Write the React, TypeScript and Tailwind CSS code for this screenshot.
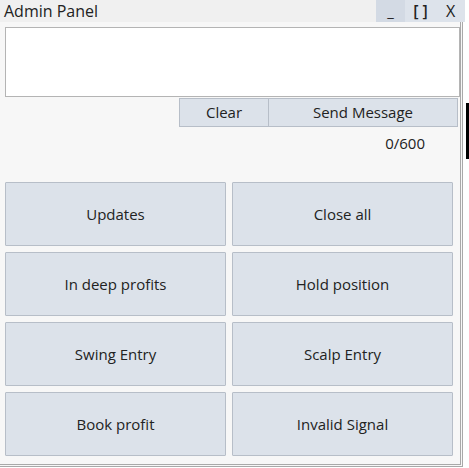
import React from "react";

const actions = [
  "Updates",
  "Close all",
  "In deep profits",
  "Hold position",
  "Swing Entry",
  "Scalp Entry",
  "Book profit",
  "Invalid Signal",
];

export default function App() {
  return (
    <div
      className="relative w-[469px] h-[468px] bg-white overflow-hidden text-[#222]"
      style={{ fontFamily: '"Open Sans", "DejaVu Sans", sans-serif' }}
    >
      {/* title bar */}
      <div className="flex h-[22px] w-[465px] items-center bg-[#f0f0f0]">
        <div className="flex-1 pl-[4px] text-[16px] leading-none">Admin Panel</div>
        <div className="flex h-full bg-[#dde3eb]">
          <div className="flex w-[29px] items-end justify-center pb-[3px] text-[15px] leading-none bg-[#d3dae4]">_</div>
          <div className="flex w-[31px] items-center justify-center text-[16px] leading-none font-semibold">[ ]</div>
          <div className="flex w-[29px] items-center justify-center text-[16px] leading-none">X</div>
        </div>
      </div>

      {/* window body */}
      <div className="w-[463px] h-[445px] bg-[#f7f7f7] border-r-[3px] border-b-[3px] border-double border-[#a9a9a9] border-t-0 border-l-0">
        <div className="pl-[5px] pt-[5px] pr-[1px]">
          <div className="h-[70px] w-[455px] bg-white border border-[#b4b4b4]" />
          <div className="flex justify-end pt-[1px] pr-[1px]">
            <button className="h-[29px] w-[90px] bg-[#dce2ea] border border-[#b7bec8] text-[15px]">Clear</button>
            <button className="h-[29px] w-[189px] bg-[#dce2ea] border border-l-0 border-[#b7bec8] text-[15px]">
              Send Message
            </button>
          </div>
          <div className="flex justify-end pr-[34px] pt-[6px] text-[15px] leading-[20px]">0/600</div>
        </div>

        <div className="grid grid-cols-2 gap-[6px] pl-[5px] pr-[7px] pt-[29px]">
          {actions.map((a) => (
            <button
              key={a}
              className="h-[64px] bg-[#dce2ea] border border-[#b7bec8] rounded-[1px] text-[15px]"
            >
              {a}
            </button>
          ))}
        </div>
      </div>

      <div className="absolute left-[466px] top-[103px] h-[56px] w-[3px] bg-black" />
    </div>
  );
}
